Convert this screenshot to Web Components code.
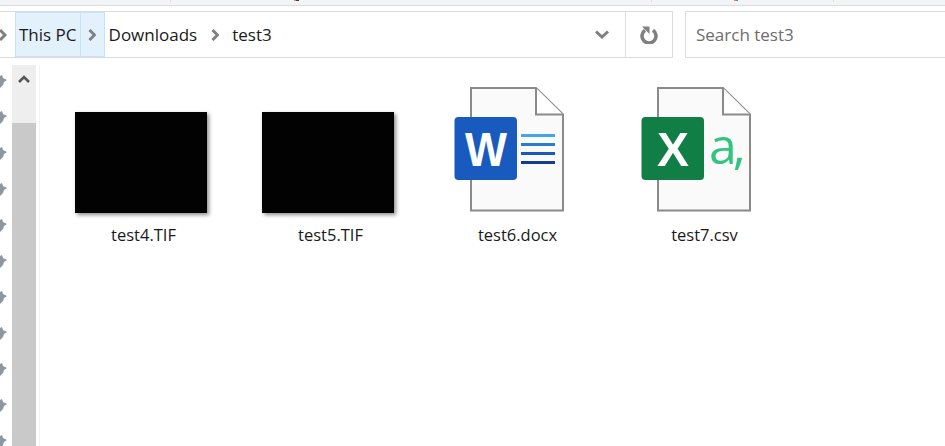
<!DOCTYPE html>
<html>
<head>
<meta charset="utf-8">
<title>test3</title>
<style>
  html, body { margin: 0; height: 100%; overflow: hidden; background: #fff; }
  body { font-family: "Open Sans", "Noto Sans", sans-serif; color: #1a1a1a; }
  explorer-window { height: 446px; }
</style>
</head>
<body>
<explorer-window>
  <top-strip slot="strip"></top-strip>
  <address-row slot="address">
    <crumb-item hot>This PC</crumb-item>
    <crumb-item>Downloads</crumb-item>
    <crumb-item last>test3</crumb-item>
  </address-row>
  <nav-rail slot="rail"></nav-rail>
  <file-grid slot="files">
    <file-tile name="test4.TIF"><thumb-image></thumb-image></file-tile>
    <file-tile name="test5.TIF"><thumb-image></thumb-image></file-tile>
    <file-tile name="test6.docx"><doc-icon kind="word"></doc-icon></file-tile>
    <file-tile name="test7.csv"><doc-icon kind="csv"></doc-icon></file-tile>
  </file-grid>
</explorer-window>

<script>
// page outline shared by both document icons
const PAGE = `
  <path d="M17 1H82L109 27.5V123.5H17Z" fill="#fafafa" stroke="#8a8a88" stroke-width="2"/>
  <path d="M82 1V27.5H109" fill="#fff" stroke="#8a8a88" stroke-width="2"/>`;

const ICONS = {
  word: `${PAGE}
    <rect x="0.5" y="30" width="62.5" height="63" rx="4" fill="#185abd"/>
    <text x="11" y="79" font-family="Liberation Sans" font-weight="700" font-size="49" fill="#fff" textLength="42" lengthAdjust="spacingAndGlyphs">W</text>
    <rect x="67" y="47" width="34" height="3" fill="#41a5ee"/>
    <rect x="67" y="56" width="34" height="3" fill="#2b7cd3"/>
    <rect x="67" y="65" width="34" height="3" fill="#185abd"/>
    <rect x="67" y="74" width="34" height="3" fill="#103f91"/>`,
  csv: `${PAGE}
    <rect x="0.5" y="30" width="62.5" height="63" rx="4" fill="#117e45"/>
    <text x="16" y="79" font-family="Liberation Sans" font-weight="700" font-size="49" fill="#fff" textLength="32" lengthAdjust="spacingAndGlyphs">X</text>
    <text x="68" y="77" font-family="Open Sans" font-size="50" letter-spacing="-4" fill="#33c481">a,</text>`
};

class ExplorerWindow extends HTMLElement {
  constructor() {
    super();
    this.attachShadow({ mode: 'open' }).innerHTML = `
      <style>
        :host { display: flex; flex-direction: column; overflow: hidden; }
        .body { flex: 1; display: flex; min-height: 0; margin-top: 7px; }
      </style>
      <slot name="strip"></slot>
      <slot name="address"></slot>
      <div class="body">
        <slot name="rail"></slot>
        <slot name="files"></slot>
      </div>`;
  }
}

class TopStrip extends HTMLElement {
  constructor() {
    super();
    this.attachShadow({ mode: 'open' }).innerHTML = `
      <style>
        :host { display: flex; height: 5px; background: #f3f4f6; border-bottom: 1px solid #dcdcdc; align-items: flex-start; }
        i { flex: none; width: 1px; height: 2px; background: #dcdcdc; }
        b { flex: none; height: 1px; width: 2px; }
      </style>
      <i style="margin-left:170px"></i>
      <b style="margin-left:123px;background:#e08a3c"></b><b style="width:3px;background:#2f3f73"></b>
      <i style="margin-left:352px"></i>
      <b style="margin-left:82px;background:#e08a3c"></b><b style="background:#3f8fd8"></b>
      <i style="margin-left:95px"></i>`;
  }
}

class AddressRow extends HTMLElement {
  constructor() {
    super();
    this.attachShadow({ mode: 'open' }).innerHTML = `
      <style>
        :host { display: flex; height: 47px; margin-top: 5px; font-size: 17px; }
        .bar { display: flex; width: 673px; flex: none; box-sizing: border-box; border: 1px solid #dcdcdc; border-left: 0; }
        .crumbs { flex: 1; display: flex; align-items: stretch; }
        .lead { width: 15px; display: flex; align-items: center; }
        .drop { width: 47px; box-sizing: border-box; display: flex; align-items: center; justify-content: center; }
        .refresh { width: 47px; box-sizing: border-box; display: flex; align-items: center; justify-content: center; border-left: 1px solid #dcdcdc; }
        .search { flex: 1; margin-left: 12px; box-sizing: border-box; border: 1px solid #dcdcdc; border-right: 0; display: flex; align-items: center; padding-left: 10px; color: #6d6d6d; }
      </style>
      <div class="bar">
        <div class="crumbs">
          <div class="lead"><svg width="7" height="12" viewBox="0 0 7 12"><path d="M0 1L5 6L0 11" fill="none" stroke="#808080" stroke-width="3"/></svg></div>
          <slot></slot>
        </div>
        <div class="drop"><svg width="14" height="9" viewBox="0 0 14 9"><path d="M1 1.5L7 7L13 1.5" fill="none" stroke="#808080" stroke-width="3"/></svg></div>
        <div class="refresh"><svg width="18" height="18" viewBox="0 0 18 18"><path d="M5 4.2A7 7 0 1 0 13 4.2" fill="none" stroke="#808080" stroke-width="3.6"/><path d="M2 0.5H9.5V8Z" fill="#808080"/></svg></div>
      </div>
      <div class="search">Search test3</div>`;
  }
}

class CrumbItem extends HTMLElement {
  constructor() {
    super();
    const last = this.hasAttribute('last');
    this.attachShadow({ mode: 'open' }).innerHTML = `
      <style>
        :host { display: flex; align-items: stretch; }
        .label, .arrow { display: flex; align-items: center; box-sizing: border-box; }
        .label { padding: 0 4px; }
        .arrow { width: 27px; justify-content: center; }
        :host([hot]) .label, :host([hot]) .arrow { background: #e3f1fd; border: 1px solid #c4e2fa; }
        :host([hot]) .label { border-right: 0; padding: 0 3px; }
        :host([hot]) .arrow { width: 25px; }
        svg { display: block; }
      </style>
      <span class="label"><slot></slot></span>
      ${last ? '' : `<span class="arrow"><svg width="8" height="12" viewBox="0 0 8 12"><path d="M1.5 1L6.5 6L1.5 11" fill="none" stroke="#808080" stroke-width="3"/></svg></span>`}`;
  }
}

class NavRail extends HTMLElement {
  constructor() {
    super();
    const pin = `<svg width="8" height="13" viewBox="0 0 8 13"><path d="M0 1L2 0L3 3L7 5L4 7L3 10L0 13Z" fill="#8d979f"/></svg>`;
    this.attachShadow({ mode: 'open' }).innerHTML = `
      <style>
        :host { display: flex; flex: none; width: 40px; box-sizing: border-box; border-right: 1px solid #f3f3f3; }
        .pins { width: 12px; display: flex; flex-direction: column; gap: 23px; padding-top: 10px; }
        .pins svg { display: block; flex: none; }
        .bar { width: 24px; display: flex; flex-direction: column; }
        .up { height: 58px; background: #eeeeee; display: flex; justify-content: center; padding-top: 10px; box-sizing: border-box; }
        .thumb { flex: 1; background: #c9c9c9; }
      </style>
      <div class="pins">${pin.repeat(11)}</div>
      <div class="bar">
        <div class="up"><svg width="12" height="8" viewBox="0 0 12 8"><path d="M1 7L6 2L11 7" fill="none" stroke="#555" stroke-width="2.6"/></svg></div>
        <div class="thumb"></div>
      </div>`;
  }
}

class FileGrid extends HTMLElement {
  constructor() {
    super();
    this.attachShadow({ mode: 'open' }).innerHTML = `
      <style>
        :host { flex: 1; display: flex; padding: 21px 0 0 10px; align-items: flex-start; }
      </style>
      <slot></slot>`;
  }
}

class FileTile extends HTMLElement {
  constructor() {
    super();
    this.attachShadow({ mode: 'open' }).innerHTML = `
      <style>
        :host { display: flex; flex-direction: column; flex: none; width: 187px; font-size: 16.5px; }
        .art { height: 127px; display: flex; align-items: flex-end; }
        .name { text-align: center; margin-top: 11px; line-height: 22px; }
      </style>
      <div class="art"><slot></slot></div>
      <div class="name">${this.getAttribute('name')}</div>`;
  }
}

class ThumbImage extends HTMLElement {
  constructor() {
    super();
    this.attachShadow({ mode: 'open' }).innerHTML = `
      <style>
        :host { display: block; width: 132px; height: 101px; margin-left: 25px; background: #020202; box-shadow: 2px 2px 4px rgba(0,0,0,.45); }
      </style>`;
  }
}

class DocIcon extends HTMLElement {
  constructor() {
    super();
    this.attachShadow({ mode: 'open' }).innerHTML = `
      <style>
        :host { display: block; width: 110px; height: 125px; margin-left: 30px; margin-bottom: 1px; }
        svg { display: block; overflow: visible; }
      </style>
      <svg width="110" height="125" viewBox="0 0 110 125">${ICONS[this.getAttribute('kind')]}</svg>`;
  }
}

customElements.define('explorer-window', ExplorerWindow);
customElements.define('top-strip', TopStrip);
customElements.define('address-row', AddressRow);
customElements.define('crumb-item', CrumbItem);
customElements.define('nav-rail', NavRail);
customElements.define('file-grid', FileGrid);
customElements.define('file-tile', FileTile);
customElements.define('thumb-image', ThumbImage);
customElements.define('doc-icon', DocIcon);
</script>
</body>
</html>
